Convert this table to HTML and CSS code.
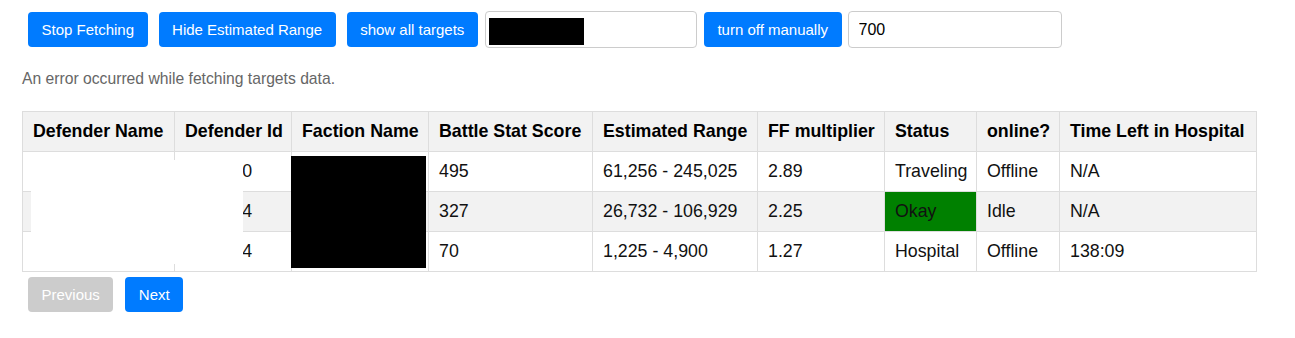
FILE: index.html
```html
<!DOCTYPE html>
<html lang="en">
<head>
<meta charset="utf-8">
<title>Targets</title>
<link rel="stylesheet" href="styles.css">
</head>
<body>
<div class="app">
  <div class="toolbar">
    <button class="btn">Stop Fetching</button>
    <button class="btn">Hide Estimated Range</button>
    <button class="btn">show all targets</button>
    <div class="field field-a">
      <input class="input" type="text" value="">
      <span class="redact-black redact-input"></span>
    </div>
    <button class="btn">turn off manually</button>
    <div class="field field-b">
      <input class="input" type="text" value="700">
    </div>
  </div>

  <p class="error">An error occurred while fetching targets data.</p>

  <div class="table-wrap">
    <table class="targets">
      <colgroup>
        <col class="c1"><col class="c2"><col class="c3"><col class="c4"><col class="c5"><col class="c6"><col class="c7"><col class="c8"><col class="c9">
      </colgroup>
      <thead>
        <tr>
          <th>Defender Name</th>
          <th>Defender Id</th>
          <th>Faction Name</th>
          <th>Battle Stat Score</th>
          <th>Estimated Range</th>
          <th>FF multiplier</th>
          <th>Status</th>
          <th>online?</th>
          <th>Time Left in Hospital</th>
        </tr>
      </thead>
      <tbody>
        <tr>
          <td></td>
          <td class="id">2938120</td>
          <td></td>
          <td>495</td>
          <td>61,256 - 245,025</td>
          <td>2.89</td>
          <td>Traveling</td>
          <td>Offline</td>
          <td>N/A</td>
        </tr>
        <tr class="alt">
          <td></td>
          <td class="id">3012454</td>
          <td></td>
          <td>327</td>
          <td>26,732 - 106,929</td>
          <td>2.25</td>
          <td class="status-okay">Okay</td>
          <td>Idle</td>
          <td>N/A</td>
        </tr>
        <tr>
          <td></td>
          <td class="id">1876354</td>
          <td></td>
          <td>70</td>
          <td>1,225 - 4,900</td>
          <td>1.27</td>
          <td>Hospital</td>
          <td>Offline</td>
          <td>138:09</td>
        </tr>
      </tbody>
    </table>
    <span class="redact-white"></span>
    <span class="redact-black redact-faction"></span>
  </div>

  <div class="pager">
    <button class="btn btn-disabled" disabled>Previous</button>
    <button class="btn">Next</button>
  </div>
</div>
</body>
</html>
```

FILE: styles.css
```css
* { box-sizing: border-box; }

body {
  margin: 8px;
  font-family: "Liberation Sans", Arial, sans-serif;
  color: #111;
  background: #fff;
}

.app {
  padding-left: 14px;
}

.toolbar {
  display: flex;
  align-items: center;
  gap: 7px;
  padding-top: 3px;
  padding-left: 6px;
}

.btn {
  height: 35px;
  padding: 0 13.5px;
  border: none;
  border-radius: 4px;
  background: #007bff;
  color: #fff;
  font-family: "Liberation Sans", Arial, sans-serif;
  font-size: 15px;
  line-height: 35px;
  cursor: pointer;
}

.btn + .btn { margin-left: 4px; }

.btn-disabled {
  background: #cccccc;
  color: #fff;
  cursor: default;
}

.field {
  position: relative;
  height: 37px;
}

.field-a { width: 212px; }
.field-b { width: 214px; margin-left: -1px; }

.input {
  width: 100%;
  height: 37px;
  border: 1px solid #ccc;
  border-radius: 4px;
  padding: 0 10px;
  font-family: "Liberation Sans", Arial, sans-serif;
  font-size: 16px;
  color: #000;
  background: #fff;
}

.redact-black {
  position: absolute;
  background: #000;
}

.redact-input {
  left: 4px;
  top: 7px;
  width: 95px;
  height: 27px;
}

.error {
  margin: 22px 0 23px;
  font-size: 15.7px;
  line-height: 18px;
  color: #666;
}

.table-wrap {
  position: relative;
  width: 1234px;
}

.targets {
  border-collapse: collapse;
  table-layout: fixed;
  width: 1234px;
  font-size: 17.8px;
}

.c1 { width: 152px; }
.c2 { width: 117px; }
.c3 { width: 137px; }
.c4 { width: 164px; }
.c5 { width: 165px; }
.c6 { width: 127px; }
.c7 { width: 92px; }
.c8 { width: 83px; }
.c9 { width: 197px; }

.targets th,
.targets td {
  border: 1px solid #ddd;
  height: 40px;
  padding: 0 10px;
  text-align: left;
  vertical-align: middle;
  white-space: nowrap;
  overflow: hidden;
}

.targets th {
  background: #f2f2f2;
  font-weight: bold;
  color: #000;
}

.targets td.id {
  padding-left: 8px;
}

.targets tr.alt td {
  background: #f2f2f2;
}

.targets tr.alt td.status-okay {
  background: #008000;
  color: #111;
}

.redact-white {
  position: absolute;
  left: 9px;
  top: 49px;
  width: 212px;
  height: 104px;
  background: #fff;
}

.redact-faction {
  left: 269px;
  top: 45px;
  width: 135px;
  height: 112px;
}

.pager {
  display: flex;
  gap: 8px;
  padding-left: 6px;
  margin-top: 5px;
}
```
